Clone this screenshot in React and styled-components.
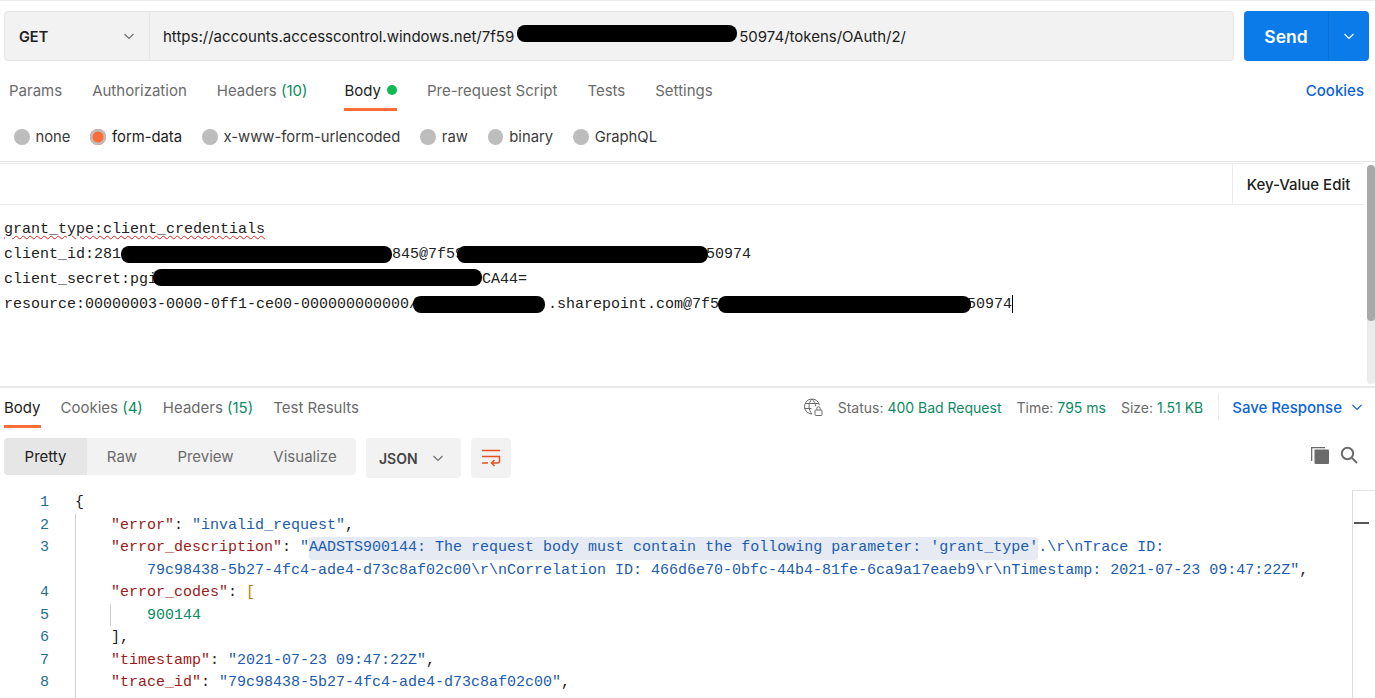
import React from "react"
import styled, { createGlobalStyle } from "styled-components"

const Global = createGlobalStyle`
  html, body { margin: 0; padding: 0; background: #fff; overflow: hidden; }
  * { box-sizing: border-box; }
`

const Page = styled.div`
  width: 1375px;
  height: 698px;
  overflow: hidden;
  font-family: Inter, "Liberation Sans", sans-serif;
  font-size: 15px;
  color: #6b6b6b;
  border-top: 1px solid #ececec;
`

const UrlRow = styled.div`
  display: flex;
  gap: 10px;
  padding: 10px 6px 0 4px;
`

const UrlBox = styled.div`
  flex: 1;
  height: 50px;
  display: flex;
  background: #f2f2f2;
  border: 1px solid #e6e6e6;
  border-radius: 4px;
`

const Method = styled.div`
  width: 145px;
  display: flex;
  align-items: center;
  justify-content: space-between;
  padding: 0 14px;
  border-right: 1px solid #e6e6e6;
  font-weight: 600;
  font-size: 14.5px;
  color: #212121;
`

const UrlText = styled.div`
  display: flex;
  align-items: center;
  padding-left: 13px;
  color: #212121;
  white-space: pre;
`

// black marker strokes that sit on top of the secrets
const Redact = styled.span`
  position: relative;
  z-index: 1;
  top: ${(p) => p.$dy || 0}px;
  display: inline-block;
  flex: none;
  width: ${(p) => p.$w}px;
  height: 17px;
  margin-left: ${(p) => p.$ml || 0}px;
  margin-right: ${(p) => p.$mr || 0}px;
  background: #000;
  border-radius: 8px;
  vertical-align: middle;
`

const SendButton = styled.div`
  width: 125px;
  height: 50px;
  display: flex;
  background: #0c7bea;
  border-radius: 4px;
  color: #fff;
`

const SendLabel = styled.div`
  flex: 1;
  display: flex;
  align-items: center;
  justify-content: center;
  font-size: 17.5px;
  font-weight: 600;
  border-right: 1px solid #0a6fd4;
`

const SendCaret = styled.div`
  width: 40px;
  display: flex;
  align-items: center;
  justify-content: center;
`

const TabRow = styled.div`
  display: flex;
  align-items: flex-start;
  gap: 30px;
  height: 40px;
  margin-top: 12px;
  padding: 8px 11px 0 9px;
`

const Tab = styled.div`
  height: 30px;
  display: flex;
  align-items: flex-start;
  gap: 6px;
  margin-left: ${(p) => (p.$active ? 7 : 0)}px;
  white-space: nowrap;
  color: ${(p) => (p.$active ? "#212121" : "#6b6b6b")};
  border-bottom: 3px solid ${(p) => (p.$active ? "#ff6c37" : "transparent")};
`

const Count = styled.span`
  color: #0c8a63;
`

const Dot = styled.span`
  width: 10px;
  height: 10px;
  margin-top: 4px;
  border-radius: 50%;
  background: #0cbb52;
`

const CookiesLink = styled.div`
  margin-left: auto;
  font-weight: 500;
  color: #0c64d8;
`

const RadioRow = styled.div`
  display: flex;
  align-items: center;
  height: 32px;
  margin-top: 8px;
  padding-left: 14px;
  gap: 20px;
  font-size: 14.8px;
`

const RadioItem = styled.div`
  display: flex;
  align-items: center;
  gap: 6px;
  color: ${(p) => (p.$on ? "#212121" : "#3a3a3a")};
`

const Radio = styled.span`
  width: 15.5px;
  height: 16px;
  border-radius: 50%;
  background: ${(p) => (p.$on ? "#ff6c37" : "#bdbdbd")};
  box-shadow: ${(p) => (p.$on ? "inset 0 0 0 2.5px #bdbdbd" : "none")};
`

const EditorPane = styled.div`
  position: relative;
  height: 227px;
  margin-top: 8px;
  border-top: 1px solid #e6e6e6;
  border-bottom: 2px solid #e8e8e8;
  padding-top: 1px;
`

const EditorBar = styled.div`
  display: flex;
  justify-content: flex-end;
  height: 42px;
  margin-right: 11px;
  border-top: 1px solid #ececec;
  border-bottom: 1px solid #ececec;
`

const KeyValueToggle = styled.div`
  width: 132px;
  display: flex;
  align-items: center;
  justify-content: center;
  border-left: 1px solid #ececec;
  font-weight: 500;
  color: #212121;
`

const BulkText = styled.div`
  padding: 12px 0 0 4px;
  font-family: "Liberation Mono", monospace;
  font-size: 15px;
  line-height: 25px;
  color: #212121;
  white-space: pre;
`

const BulkLine = styled.div`
  height: 25px;
`

const Squiggle = styled.span`
  text-decoration: underline wavy #e02020 1px;
  text-underline-offset: 2px;
`

const Caret = styled.span`
  display: inline-block;
  width: 1px;
  height: 18px;
  background: #000;
  vertical-align: middle;
`

const ScrollTrack = styled.div`
  position: absolute;
  top: 3px;
  right: 0;
  bottom: 2px;
  width: 8px;
  background: #ececec;
  border-radius: 4px;
`

const ScrollThumb = styled.div`
  height: 156px;
  background: #a8a8a8;
  border-radius: 4px;
`

const ResponseBar = styled.div`
  display: flex;
  align-items: flex-start;
  height: 41px;
  padding: 10px 0 0 4px;
`

const ResponseTabs = styled.div`
  display: flex;
  gap: 20px;
`

const ResponseTab = styled.div`
  height: 30px;
  color: ${(p) => (p.$active ? "#212121" : "#6b6b6b")};
  border-bottom: 3px solid ${(p) => (p.$active ? "#ff6c37" : "transparent")};
`

const Meta = styled.div`
  margin-left: auto;
  display: flex;
  align-items: center;
  height: 18px;
  font-size: 14px;
  gap: 15px;
`

const MetaItem = styled.span`
  white-space: nowrap;
`

const MetaValue = styled.span`
  color: #0c8a63;
`

const SaveResponse = styled.div`
  display: flex;
  align-items: center;
  gap: 9px;
  height: 26px;
  padding: 0 12px 0 13px;
  border-left: 1px solid #ececec;
  font-size: 15px;
  font-weight: 500;
  color: #0c64d8;
`

const FormatRow = styled.div`
  display: flex;
  align-items: flex-start;
  gap: 10px;
  height: 40px;
  margin-top: 9px;
  padding: 0 17px 0 4px;
`

const Segments = styled.div`
  display: flex;
  height: 37px;
  width: 352px;
  background: #f2f2f2;
  border-radius: 4px;
  overflow: hidden;
`

const Segment = styled.div`
  display: flex;
  align-items: center;
  justify-content: center;
  width: ${(p) => p.$w}px;
  background: ${(p) => (p.$active ? "#e6e6e6" : "transparent")};
  color: ${(p) => (p.$active ? "#212121" : "#6b6b6b")};
`

const LangSelect = styled.div`
  width: 95px;
  height: 40px;
  display: flex;
  align-items: center;
  justify-content: space-between;
  padding: 0 17px 0 13px;
  background: #f2f2f2;
  border-radius: 4px;
  font-size: 14px;
  font-weight: 600;
  color: #444;
`

const WrapButton = styled.div`
  width: 40px;
  height: 40px;
  display: flex;
  align-items: center;
  justify-content: center;
  background: #f2f2f2;
  border-radius: 4px;
`

const RightIcons = styled.div`
  margin-left: auto;
  display: flex;
  align-items: center;
  gap: 11px;
  height: 34px;
`

const CodeArea = styled.div`
  position: relative;
  display: flex;
  margin-top: 12px;
  padding-top: 2px;
  height: 210px;
  font-family: "Liberation Mono", monospace;
  font-size: 15px;
  line-height: 22.5px;
  white-space: pre;
`

const Gutter = styled.div`
  width: 49px;
  text-align: right;
  color: #1f6f93;
`

const GutterNum = styled.div`
  height: ${(p) => (p.$double ? 45 : 22.5)}px;
`

const Code = styled.div`
  position: relative;
  margin-left: 26px;
  color: #212121;
`

const CodeLine = styled.div`
  height: 22.5px;
  padding-left: ${(p) => (p.$indent || 0) * 9}px;
`

const Key = styled.span`
  color: #9c1a1a;
`

const Str = styled.span`
  color: #1c5cb0;
`

const Num = styled.span`
  color: #0c8a63;
`

const Bracket = styled.span`
  color: #b8860b;
`

const Highlight = styled.span`
  display: inline-block;
  height: 22.5px;
  background: #e6eaf2;
  border-radius: 3px;
`

const IndentGuide = styled.div`
  position: absolute;
  left: ${(p) => p.$x}px;
  top: ${(p) => p.$top}px;
  width: 1px;
  height: ${(p) => p.$h}px;
  background: #d0d0d0;
`

const Minimap = styled.div`
  position: absolute;
  top: 0;
  right: 0;
  width: 23px;
  height: 210px;
  border-left: 1px solid #dcdcdc;
  border-top: 1px solid #e4e4e4;
`

const MinimapMark = styled.div`
  height: 2px;
  margin-top: 31px;
  margin-left: 1px;
  width: 15px;
  background: #555;
`

const Chevron = ({ color = "#6b6b6b", size = 12 }) => (
  <svg width={size} height={size} viewBox="0 0 12 12" fill="none">
    <path d="M1.5 4l4.5 4.5L10.5 4" stroke={color} strokeWidth="1.1" />
  </svg>
)

const GlobeLock = () => (
  <svg width="20" height="20" viewBox="0 0 20 20" fill="none" stroke="#6b6b6b" strokeWidth="1">
    <path d="M9 17a7.5 7.5 0 1 1 7.4-8.8" />
    <path d="M2 6.5h14M1.5 11.5h7" />
    <path d="M9 2c-4 3.8-4 10.5 0 15M9 2c2.4 2.3 3.4 4.8 3.6 7.2" />
    <rect x="12" y="13" width="7" height="5.5" rx="1" />
    <path d="M13.8 13v-1.5a1.7 1.7 0 0 1 3.4 0V13" />
  </svg>
)

const WrapIcon = () => (
  <svg width="20" height="18" viewBox="0 0 20 18" fill="none" stroke="#e8501f" strokeWidth="1.5">
    <path d="M1 1.5h18M1 7.5h18M1 14h6" />
    <path d="M18.5 7.5V12a2 2 0 0 1-2 2H10.5M13.5 11l-3 3 3 3" />
  </svg>
)

const CopyIcon = () => (
  <svg width="19" height="18" viewBox="0 0 19 18" fill="#6b6b6b">
    <path d="M4.5 3.5H18a1 1 0 0 1 1 1V17a1 1 0 0 1-1 1H5.5a1 1 0 0 1-1-1z" />
    <path d="M1 1h14v1.3H2.3V15H1z" />
  </svg>
)

const SearchIcon = () => (
  <svg width="18" height="18" viewBox="0 0 18 18" fill="none" stroke="#6b6b6b" strokeWidth="2">
    <circle cx="7.5" cy="7.5" r="5.7" />
    <path d="M12 12l5 5" />
  </svg>
)

const requestTabs = [
  { label: "Params" },
  { label: "Authorization" },
  { label: "Headers", count: "(10)" },
  { label: "Body", active: true, dot: true },
  { label: "Pre-request Script" },
  { label: "Tests" },
  { label: "Settings" },
]

const bodyModes = ["none", "form-data", "x-www-form-urlencoded", "raw", "binary", "GraphQL"]

const lineNumbers = [1, 2, 3, 4, 5, 6, 7, 8]

export default function App() {
  return (
    <Page>
      <Global />
      <UrlRow>
        <UrlBox>
          <Method>
            GET
            <Chevron />
          </Method>
          <UrlText>
            https://accounts.accesscontrol.windows.net/7f59
            <Redact $w={220} $ml={3} $mr={2} $dy={-3} />
            50974/tokens/OAuth/2/
          </UrlText>
        </UrlBox>
        <SendButton>
          <SendLabel>Send</SendLabel>
          <SendCaret>
            <Chevron color="#fff" />
          </SendCaret>
        </SendButton>
      </UrlRow>

      <TabRow>
        {requestTabs.map((t) => (
          <Tab key={t.label} $active={t.active}>
            <span>
              {t.label}
              {t.count && <Count> {t.count}</Count>}
            </span>
            {t.dot && <Dot />}
          </Tab>
        ))}
        <CookiesLink>Cookies</CookiesLink>
      </TabRow>

      <RadioRow>
        {bodyModes.map((m) => (
          <RadioItem key={m} $on={m === "form-data"}>
            <Radio $on={m === "form-data"} />
            {m}
          </RadioItem>
        ))}
      </RadioRow>

      <EditorPane>
        <EditorBar>
          <KeyValueToggle>Key-Value Edit</KeyValueToggle>
        </EditorBar>
        <BulkText>
          <BulkLine>
            <Squiggle>grant_type:client_credentials</Squiggle>
          </BulkLine>
          <BulkLine>
            client_id:281
            <Redact $w={271} />
            845@7f59
            <Redact $w={251} $ml={-7} $mr={-2} />
            50974
          </BulkLine>
          <BulkLine>
            client_secret:pgi
            <Redact $w={329} $ml={-4} $dy={-2} />
            CA44=
          </BulkLine>
          <BulkLine>
            resource:00000003-0000-0ff1-ce00-000000000000/
            <Redact $w={132} $ml={-5} $mr={3} />
            .sharepoint.com@7f59
            <Redact $w={253} $ml={-10} $mr={-4} />
            50974
            <Caret />
          </BulkLine>
        </BulkText>
        <ScrollTrack>
          <ScrollThumb />
        </ScrollTrack>
      </EditorPane>

      <ResponseBar>
        <ResponseTabs>
          <ResponseTab $active>Body</ResponseTab>
          <ResponseTab>
            Cookies <Count>(4)</Count>
          </ResponseTab>
          <ResponseTab>
            Headers <Count>(15)</Count>
          </ResponseTab>
          <ResponseTab>Test Results</ResponseTab>
        </ResponseTabs>
        <Meta>
          <GlobeLock />
          <MetaItem>
            Status: <MetaValue>400 Bad Request</MetaValue>
          </MetaItem>
          <MetaItem>
            Time: <MetaValue>795 ms</MetaValue>
          </MetaItem>
          <MetaItem>
            Size: <MetaValue>1.51 KB</MetaValue>
          </MetaItem>
          <SaveResponse>
            Save Response
            <Chevron color="#0c64d8" />
          </SaveResponse>
        </Meta>
      </ResponseBar>

      <FormatRow>
        <Segments>
          <Segment $active $w={83}>Pretty</Segment>
          <Segment $w={70}>Raw</Segment>
          <Segment $w={97}>Preview</Segment>
          <Segment $w={102}>Visualize</Segment>
        </Segments>
        <LangSelect>
          JSON
          <Chevron />
        </LangSelect>
        <WrapButton>
          <WrapIcon />
        </WrapButton>
        <RightIcons>
          <CopyIcon />
          <SearchIcon />
        </RightIcons>
      </FormatRow>

      <CodeArea>
        <Gutter>
          {lineNumbers.map((n) => (
            <GutterNum key={n} $double={n === 3}>{n}</GutterNum>
          ))}
        </Gutter>
        <Code>
          <CodeLine>{"{"}</CodeLine>
          <CodeLine $indent={4}>
            <Key>"error"</Key>: <Str>"invalid_request"</Str>,
          </CodeLine>
          <CodeLine $indent={4}>
            <Key>"error_description"</Key>: <Str>"<Highlight>AADSTS900144: The request body must contain the following parameter: 'grant_type'</Highlight>.\r\nTrace ID:</Str>
          </CodeLine>
          <CodeLine $indent={8}>
            <Str>79c98438-5b27-4fc4-ade4-d73c8af02c00\r\nCorrelation ID: 466d6e70-0bfc-44b4-81fe-6ca9a17eaeb9\r\nTimestamp: 2021-07-23 09:47:22Z"</Str>,
          </CodeLine>
          <CodeLine $indent={4}>
            <Key>"error_codes"</Key>: <Bracket>[</Bracket>
          </CodeLine>
          <CodeLine $indent={8}>
            <Num>900144</Num>
          </CodeLine>
          <CodeLine $indent={4}>],</CodeLine>
          <CodeLine $indent={4}>
            <Key>"timestamp"</Key>: <Str>"2021-07-23 09:47:22Z"</Str>,
          </CodeLine>
          <CodeLine $indent={4}>
            <Key>"trace_id"</Key>: <Str>"79c98438-5b27-4fc4-ade4-d73c8af02c00"</Str>,
          </CodeLine>
          <IndentGuide $x={0} $top={22} $h={190} />
          <IndentGuide $x={35} $top={112} $h={22} />
        </Code>
        <Minimap>
          <MinimapMark />
        </Minimap>
      </CodeArea>
    </Page>
  )
}
